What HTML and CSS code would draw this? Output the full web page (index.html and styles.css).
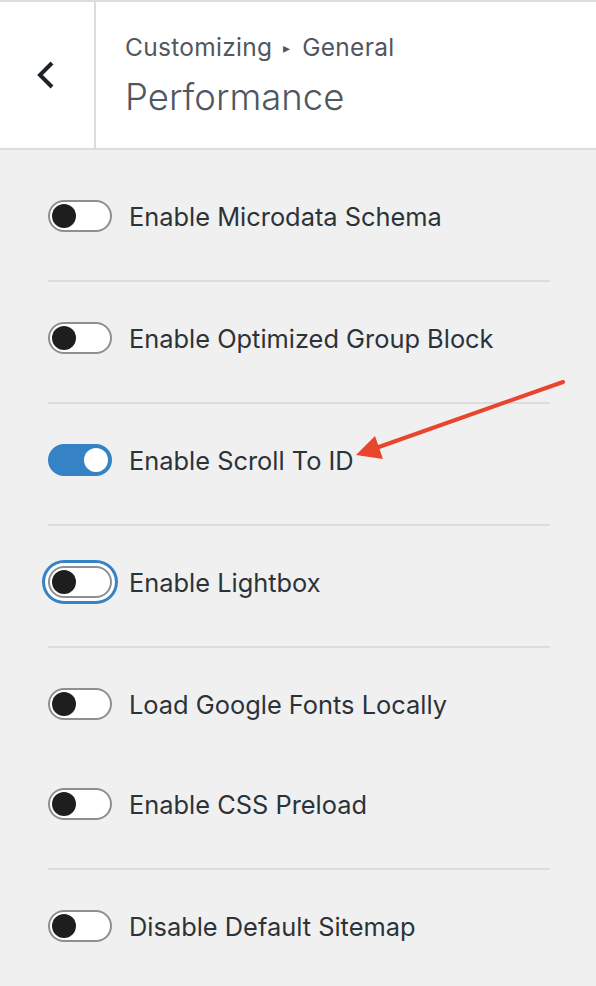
FILE: index.html
```html
<!DOCTYPE html>
<html>
<head>
    <title>Customizing - Performance</title>
    <link rel="stylesheet" href="styles.css">
</head>
<body>
    <div class="panel-header">
        <button class="back-button" aria-label="Back">
            <svg width="94" height="146" viewBox="0 0 94 146">
                <polyline points="52,61 40,73 52,85" fill="none" stroke="#1d2327" stroke-width="4" stroke-linejoin="miter" />
            </svg>
        </button>
        <div class="panel-title">
            <span class="breadcrumb">Customizing <span class="sep-arrow">&#9656;</span> General</span>
            <h3>Performance</h3>
        </div>
    </div>

    <ul class="controls">
        <li class="control"><span class="toggle"></span><label>Enable Microdata Schema</label></li>
        <li class="divider"></li>
        <li class="control"><span class="toggle"></span><label>Enable Optimized Group Block</label></li>
        <li class="divider"></li>
        <li class="control"><span class="toggle on"></span><label>Enable Scroll To ID</label></li>
        <li class="divider"></li>
        <li class="control"><span class="toggle focus"></span><label>Enable Lightbox</label></li>
        <li class="divider"></li>
        <li class="control"><span class="toggle"></span><label>Load Google Fonts Locally</label></li>
        <li class="control"><span class="toggle"></span><label>Enable CSS Preload</label></li>
        <li class="divider"></li>
        <li class="control"><span class="toggle"></span><label>Disable Default Sitemap</label></li>
    </ul>

    <!-- annotation arrow drawn over the panel -->
    <svg class="annotation" width="596" height="986" viewBox="0 0 596 986">
        <line x1="563" y1="382" x2="376" y2="448" stroke="#e8452c" stroke-width="4" stroke-linecap="round" />
        <polygon points="356,455 375,436 383,459" fill="#e8452c" />
    </svg>
</body>
</html>
```

FILE: styles.css
```css
body {
    margin: 0;
    background: #f0f0f1;
    font-family: 'Inter', 'Noto Sans', sans-serif;
    color: #2c3338;
    position: relative;
    height: 986px;
    overflow: hidden;
}
.panel-header {
    display: flex;
    background: #fff;
    border-top: 2px solid #dcdcde;
    border-bottom: 2px solid #dcdcde;
    height: 146px;
}
.back-button {
    width: 96px;
    padding: 0;
    margin: 0;
    border: none;
    border-right: 2px solid #dcdcde;
    background: #fff;
    display: block;
}
.back-button svg {
    display: block;
}
.panel-title {
    display: flex;
    flex-direction: column;
    padding: 28px 0 0 29px;
    color: #50575e;
}
.breadcrumb {
    font-size: 24.5px;
    letter-spacing: 0.3px;
    line-height: 34px;
}
.sep-arrow {
    font-size: 14px;
    vertical-align: 3px;
    margin: 0 5px 0 3px;
}
.panel-title h3 {
    margin: 0;
    font-size: 36.5px;
    font-weight: 300;
    line-height: 48px;
    margin-top: 8px;
}
.controls {
    list-style: none;
    margin: 0;
    padding: 50px 46px 0 48px;
    display: flex;
    flex-direction: column;
}
.control {
    display: flex;
    align-items: center;
    height: 32px;
    margin-bottom: 48px;
}
.control + .control {
    margin-top: 20px;
}
.control label {
    font-size: 25.4px;
    margin-left: 17px;
    white-space: nowrap;
}
.divider {
    height: 2px;
    background: #dcdcde;
    margin-bottom: 40px;
}
.toggle {
    box-sizing: border-box;
    width: 64px;
    height: 32px;
    border: 2px solid #8c8f94;
    border-radius: 16px;
    background: #fff;
    position: relative;
    flex-shrink: 0;
}
.toggle::after {
    content: '';
    position: absolute;
    top: 2px;
    left: 2px;
    width: 24px;
    height: 24px;
    border-radius: 50%;
    background: #1e1e1e;
}
.toggle.on {
    background: #3582c4;
    border-color: #3582c4;
}
.toggle.on::after {
    left: auto;
    right: 2px;
    background: #fff;
}
.toggle.focus {
    box-shadow: 0 0 0 3px #fff, 0 0 0 6px #3582c4;
}
.annotation {
    position: absolute;
    top: 0;
    left: 0;
    pointer-events: none;
}
```
